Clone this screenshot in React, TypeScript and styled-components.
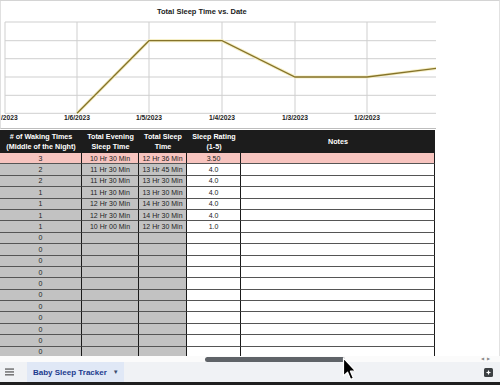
import React from "react";
import styled, { createGlobalStyle } from "styled-components";

const Global = createGlobalStyle`
  html, body { margin: 0; padding: 0; background: #ffffff; }
  body { font-family: "Liberation Sans", Arial, sans-serif; }
  * { box-sizing: border-box; }
`;

const Page = styled.div`
  position: relative;
  width: 500px;
  height: 385px;
  display: flex;
  flex-direction: column;
  overflow: hidden;
  background: #ffffff;
`;

const Main = styled.div`
  flex: 1;
  display: flex;
  flex-direction: column;
  gap: 1px;
  overflow: hidden;
  border-top: 1px solid #d4d4d4;
  border-right: 1px solid #e2e2e2;
`;

const ChartCard = styled.div`
  width: 436px;
  height: 128px;
  flex: none;
  display: flex;
  flex-direction: column;
  border-left: 1px solid #e0e0e0;
  border-bottom: 1px solid #bdbdbd;
  overflow: hidden;
`;

const ChartTitle = styled.div`
  height: 20px;
  padding: 6px 0 0 156px;
  font-size: 7.5px;
  font-weight: 700;
  color: #222;
  white-space: nowrap;
`;

const Plot = styled.svg`
  display: block;
  flex: none;
`;

const Table = styled.div`
  display: flex;
  flex-direction: column;
  width: 435px;
`;

const Row = styled.div<{ $h: number }>`
  display: grid;
  grid-template-columns: 82px 57px 48px 54px 194px;
  height: ${(p) => p.$h}px;
  flex: none;
`;

const HeadCell = styled.div`
  background: #1c1c1c;
  color: #ffffff;
  font-size: 7.2px;
  font-weight: 700;
  line-height: 9.6px;
  text-align: center;
  display: flex;
  align-items: center;
  justify-content: center;
  white-space: nowrap;
`;

type Tone = "pink" | "gray" | "white";
const toneBg: Record<Tone, string> = {
  pink: "#f7c4bf",
  gray: "#c2c2c2",
  white: "#ffffff",
};

const Cell = styled.div<{ $tone: Tone }>`
  background: ${(p) => toneBg[p.$tone]};
  border-right: 1px solid #1a1a1a;
  border-bottom: 1px solid #555555;
  font-size: 7px;
  color: #222;
  display: flex;
  align-items: center;
  justify-content: center;
  white-space: nowrap;
  overflow: hidden;
`;

const ScrollRow = styled.div`
  height: 6px;
  flex: none;
  display: flex;
  align-items: center;
  padding-left: 205px;
  background: #fbfbfb;
  position: relative;
`;

const Thumb = styled.div`
  width: 140px;
  height: 5px;
  border-radius: 3px;
  background: #5f6368;
`;

const ScrollArrows = styled.div`
  margin-left: auto;
  margin-right: 10px;
  display: flex;
  gap: 3px;
  font-size: 4px;
  color: #888;
  line-height: 6px;
`;

const BottomBar = styled.div`
  height: 20px;
  flex: none;
  display: flex;
  align-items: stretch;
  background: #f0f2f5;
`;

const MenuButton = styled.div`
  width: 27px;
  display: flex;
  align-items: center;
  padding-left: 5px;
`;

const SheetTab = styled.div`
  display: flex;
  align-items: center;
  gap: 6px;
  padding: 0 6px;
  width: 97px;
  background: #e0e8f6;
  color: #1c3b8e;
  font-size: 8px;
  font-weight: 700;
  white-space: nowrap;
`;

const Caret = styled.span`
  font-size: 6px;
  color: #3b4a6b;
`;

const ExploreButton = styled.div`
  margin-left: auto;
  width: 20px;
  display: flex;
  align-items: center;
  justify-content: center;
  margin-right: 2px;
`;

const DarkStrip = styled.div`
  height: 3px;
  flex: none;
  background: #1f1f1f;
`;

const Cursor = styled.svg`
  position: absolute;
  left: 342px;
  top: 357px;
  pointer-events: none;
`;

const OY = 21;
const xs = [5, 77, 149, 222, 295, 367, 439];
const ys = [22, 40.7, 58.7, 77, 95.3, 113.3];
const labels = ["1/6/2023", "1/5/2023", "1/4/2023", "1/3/2023", "1/2/2023"];
const linePts: [number, number][] = [
  [77, 113.3],
  [149, 40.7],
  [222, 40.7],
  [295, 77],
  [367, 77],
  [439, 68],
];

type DataRow = { w: string; e: string; t: string; r: string; pink?: boolean };
const data: DataRow[] = [
  { w: "3", e: "10 Hr 30 Min", t: "12 Hr 36 Min", r: "3.50", pink: true },
  { w: "2", e: "11 Hr 30 Min", t: "13 Hr 45 Min", r: "4.0" },
  { w: "2", e: "11 Hr 30 Min", t: "13 Hr 30 Min", r: "4.0" },
  { w: "1", e: "11 Hr 30 Min", t: "13 Hr 30 Min", r: "4.0" },
  { w: "1", e: "12 Hr 30 Min", t: "14 Hr 30 Min", r: "4.0" },
  { w: "1", e: "12 Hr 30 Min", t: "14 Hr 30 Min", r: "4.0" },
  { w: "1", e: "10 Hr 00 Min", t: "12 Hr 30 Min", r: "1.0" },
];
for (let i = 0; i < 11; i++) data.push({ w: "0", e: "", t: "", r: "" });

const labelFont = "'Liberation Sans', Arial, sans-serif";

function Chart() {
  const pts = linePts.map(([x, y]) => `${x - 1},${y - OY}`).join(" ");
  return (
    <ChartCard>
      <ChartTitle>Total Sleep Time vs. Date</ChartTitle>
      <Plot width={435} height={107} viewBox="0 0 435 107">
        {ys.map((y) => (
          <line key={y} x1={4} x2={438} y1={y - OY} y2={y - OY} stroke="#cfcfcf" strokeWidth={1} />
        ))}
        {xs.map((x) => (
          <line key={x} x1={x - 1} x2={x - 1} y1={ys[0] - OY} y2={ys[5] - OY} stroke="#cfcfcf" strokeWidth={1} />
        ))}
        <polyline points={pts} fill="none" stroke="#f6efc6" strokeWidth={3.2} strokeLinejoin="round" />
        <polyline points={pts} fill="none" stroke="#857329" strokeWidth={1.3} strokeLinejoin="miter" />
        <text x={0} y={120 - OY} fontFamily={labelFont} fontSize={6.7} fontWeight={700} fill="#222">
          /2023
        </text>
        {labels.map((l, i) => (
          <text
            key={l}
            x={xs[i + 1] - 1}
            y={120 - OY}
            textAnchor="middle"
            fontFamily={labelFont}
            fontSize={6.7}
            fontWeight={700}
            fill="#222"
          >
            {l}
          </text>
        ))}
      </Plot>
    </ChartCard>
  );
}

export default function App() {
  return (
    <Page>
      <Global />
      <Main>
        <Chart />
        <Table>
          <Row $h={23}>
            <HeadCell>
              # of Waking Times
              <br />
              (Middle of the Night)
            </HeadCell>
            <HeadCell>
              Total Evening
              <br />
              Sleep Time
            </HeadCell>
            <HeadCell>
              Total Sleep
              <br />
              Time
            </HeadCell>
            <HeadCell>
              Sleep Rating
              <br />
              (1-5)
            </HeadCell>
            <HeadCell>Notes</HeadCell>
          </Row>
          {data.map((d, i) => {
            const left: Tone = d.pink ? "pink" : "gray";
            const right: Tone = d.pink ? "pink" : "white";
            return (
              <Row key={i} $h={11.4}>
                <Cell $tone={left}>{d.w}</Cell>
                <Cell $tone={left}>{d.e}</Cell>
                <Cell $tone={left}>{d.t}</Cell>
                <Cell $tone={right}>{d.r}</Cell>
                <Cell $tone={right} />
              </Row>
            );
          })}
        </Table>
      </Main>
      <ScrollRow>
        <Thumb />
        <ScrollArrows>
          <span>◀</span>
          <span>▶</span>
        </ScrollArrows>
      </ScrollRow>
      <BottomBar>
        <MenuButton>
          <svg width="9" height="8" viewBox="0 0 9 8">
            <rect x="0" y="0.5" width="9" height="1.1" fill="#444" />
            <rect x="0" y="3.4" width="9" height="1.1" fill="#444" />
            <rect x="0" y="6.3" width="9" height="1.1" fill="#444" />
          </svg>
        </MenuButton>
        <SheetTab>
          Baby Sleep Tracker
          <Caret>▼</Caret>
        </SheetTab>
        <ExploreButton>
          <svg width="9" height="9" viewBox="0 0 9 9">
            <rect x="0" y="0" width="9" height="9" rx="1.5" fill="#3c4043" />
            <path d="M4.5 1.8 L5.2 3.8 L7.2 4.5 L5.2 5.2 L4.5 7.2 L3.8 5.2 L1.8 4.5 L3.8 3.8 Z" fill="#ffffff" />
          </svg>
        </ExploreButton>
      </BottomBar>
      <DarkStrip />
      <Cursor width="15" height="25" viewBox="0 0 15 25">
        <path
          d="M1.5 1 L1.5 19 L5.6 15.2 L8.6 22.4 L11.4 21.2 L8.4 14.2 L13.6 14.2 Z"
          fill="#000"
          stroke="#fff"
          strokeWidth="1.2"
          strokeLinejoin="round"
        />
      </Cursor>
    </Page>
  );
}
